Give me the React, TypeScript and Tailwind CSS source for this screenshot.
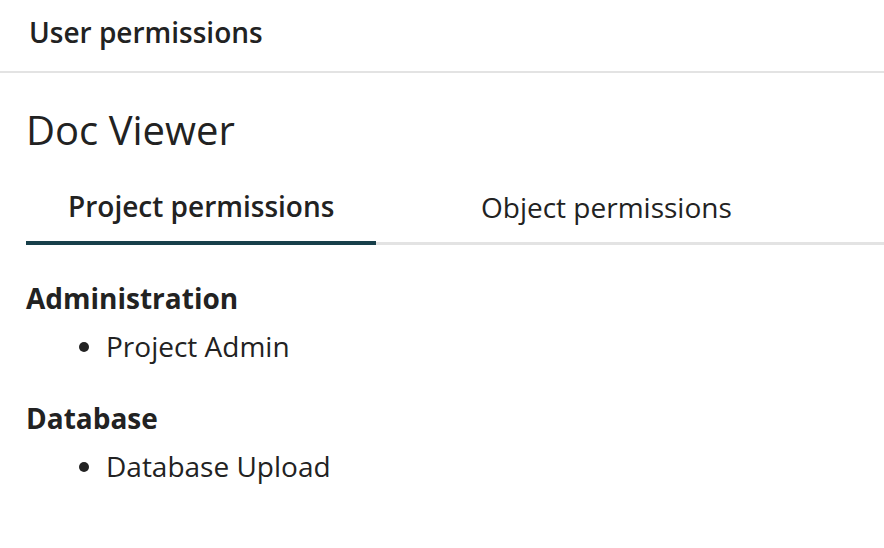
import React from "react";

const SECTIONS = [
  { title: "Administration", items: ["Project Admin"] },
  { title: "Database", items: ["Database Upload"] },
];

export default function App() {
  return (
    <div
      className="w-[884px] h-[548px] bg-white text-[#222222] overflow-hidden"
      style={{ fontFamily: '"Open Sans", "Noto Sans", sans-serif' }}
    >
      <div className="h-[73px] border-b-2 border-[#e3e3e3] pt-[18px] pl-[29px]">
        <h2 className="text-[28px] font-semibold leading-none">User permissions</h2>
      </div>

      <div className="pl-[26px]">
        <h1 className="text-[40px] leading-none mt-[37px]">Doc Viewer</h1>

        <div className="flex mt-[42px] border-b-[3px] border-[#e3e3e3]">
          <button className="w-[350px] text-[28px] font-semibold leading-none pb-[21px] border-b-4 border-[#173f4a] -mb-[3px] text-left pl-[42px]">
            Project permissions
          </button>
          <button className="text-[28px] leading-none pb-[21px] text-left pl-[105px]">
            Object permissions
          </button>
        </div>

        <div className="mt-[39px] flex flex-col gap-[44px]">
          {SECTIONS.map((s) => (
            <div key={s.title}>
              <h3 className="text-[28px] font-bold leading-none">{s.title}</h3>
              <ul className="mt-[20px] pl-[80px] list-disc">
                {s.items.map((item) => (
                  <li key={item} className="text-[28px] leading-none">
                    {item}
                  </li>
                ))}
              </ul>
            </div>
          ))}
        </div>
      </div>
    </div>
  );
}
